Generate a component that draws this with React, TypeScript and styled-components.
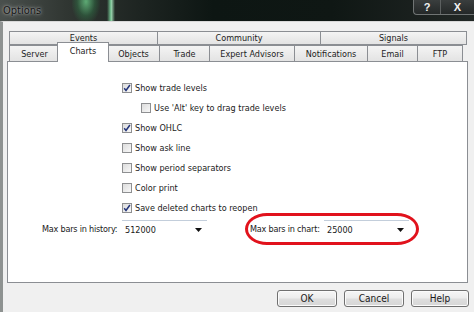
import styled, { createGlobalStyle } from "styled-components";

const GlobalStyle = createGlobalStyle`
  html, body {
    margin: 0;
    padding: 0;
    width: 474px;
    height: 312px;
    overflow: hidden;
    background: #1b211e;
  }
  * { box-sizing: border-box; }
  body {
    font-family: "DejaVu Sans Condensed", "Liberation Sans", Arial, sans-serif;
    font-size: 9px;
    color: #1a1a1a;
  }
`;

const topTabs = [
  { label: "Events", width: 148 },
  { label: "Community", width: 163 },
  { label: "Signals", width: 147 },
];

const bottomTabs = [
  { label: "Server", width: 50 },
  { label: "Charts", width: 52, active: true },
  { label: "Objects", width: 52 },
  { label: "Trade", width: 50 },
  { label: "Expert Advisors", width: 85 },
  { label: "Notifications", width: 73 },
  { label: "Email", width: 50 },
  { label: "FTP", width: 46 },
];

const options = [
  { label: "Show trade levels", checked: true },
  { label: "Use 'Alt' key to drag trade levels", checked: false, indent: true },
  { label: "Show OHLC", checked: true },
  { label: "Show ask line", checked: false },
  { label: "Show period separators", checked: false },
  { label: "Color print", checked: false },
  { label: "Save deleted charts to reopen", checked: true },
];

function CheckBox({ checked }: { checked: boolean }) {
  return (
    <Box>
      {checked && (
        <svg width="8" height="8" viewBox="0 0 8 8">
          <path d="M1.2 4.2 L3 6.4 L6.9 1" fill="none" stroke="#22337a" strokeWidth="1.5" />
        </svg>
      )}
    </Box>
  );
}

function Combo({ value, width }: { value: string; width: number }) {
  return (
    <ComboBox $width={width}>
      <span>{value}</span>
      <svg width="7" height="4" viewBox="0 0 7 4">
        <path d="M0 0 H7 L3.5 4 Z" fill="#111" />
      </svg>
    </ComboBox>
  );
}

export default function App() {
  return (
    <Window>
      <GlobalStyle />
      <TitleBar>
        <Glow />
        <Streak />
        <Title>Options</Title>
        <Controls>
          <CtrlButton $w={26}>?</CtrlButton>
          <CtrlButton $w={34}>X</CtrlButton>
        </Controls>
      </TitleBar>

      <Body>
        <TabRow>
          {topTabs.map((t) => (
            <Tab key={t.label} $width={t.width} $height={14}>{t.label}</Tab>
          ))}
        </TabRow>
        <TabRow>
          {bottomTabs.map((t) => (
            <Tab key={t.label} $width={t.width} $height={17} $active={t.active}>{t.label}</Tab>
          ))}
        </TabRow>

        <Panel>
          <OptionList>
            {options.map((o) => (
              <OptionRow key={o.label} $indent={o.indent}>
                <CheckBox checked={o.checked} />
                <span>{o.label}</span>
              </OptionRow>
            ))}
          </OptionList>

          <FieldRow>
            <Field>
              <Label $width={75}>Max bars in history:</Label>
              <Combo value="512000" width={85} />
            </Field>
            <Field>
              <Label $width={69}>Max bars in chart:</Label>
              <Combo value="25000" width={85} />
              <Highlight />
            </Field>
          </FieldRow>
        </Panel>

        <ButtonBar>
          <Button $w={60}>OK</Button>
          <Button $w={60}>Cancel</Button>
          <Button $w={58}>Help</Button>
        </ButtonBar>
      </Body>
    </Window>
  );
}

const Window = styled.div`
  width: 474px;
  height: 312px;
  display: flex;
  flex-direction: column;
  background: #1b211e;
`;

const TitleBar = styled.div`
  position: relative;
  height: 21px;
  flex-shrink: 0;
  display: flex;
  align-items: flex-start;
  background: linear-gradient(90deg, #4a504d 0%, #303632 14%, #1d2421 30%, #0d1613 45%, #0f1714 70%, #1a201e 88%, #222826 100%);
  overflow: hidden;
`;

const Glow = styled.div`
  position: absolute;
  left: 72px;
  top: -4px;
  width: 28px;
  height: 28px;
  background: radial-gradient(ellipse at 50% 20%, rgba(110, 210, 140, 0.75) 0%, rgba(50, 140, 80, 0.35) 45%, rgba(20, 60, 35, 0) 75%);
`;

const Streak = styled.div`
  position: absolute;
  left: 107px;
  top: 0;
  width: 8px;
  height: 21px;
  background: linear-gradient(90deg, rgba(60, 160, 100, 0) 0%, #7fd8a0 45%, #a8ecbf 55%, rgba(60, 160, 100, 0) 100%);
  opacity: 0.85;
`;

const Title = styled.div`
  position: relative;
  margin: 4px 0 0 3px;
  font-family: "DejaVu Sans Condensed", "Liberation Sans", Arial, sans-serif;
  font-size: 11px;
  color: #141414;
  text-shadow: 0 0 4px rgba(220, 220, 220, 0.7), 0 0 2px rgba(230, 230, 230, 0.6);
`;

const Controls = styled.div`
  position: relative;
  margin-left: auto;
  display: flex;
  height: 15px;
  border: 1px solid #707474;
  border-top: none;
  border-right: none;
  border-bottom-left-radius: 4px;
  background: linear-gradient(#3a3e3e, #242828);
  overflow: hidden;
`;

const CtrlButton = styled.div<{ $w: number }>`
  width: ${(p) => p.$w}px;
  display: flex;
  align-items: center;
  justify-content: center;
  color: #f2f2f2;
  font-family: "Liberation Sans", Arial, sans-serif;
  font-weight: bold;
  font-size: 11px;
  & + & {
    border-left: 1px solid #5c6060;
  }
`;

const Body = styled.div`
  flex: 1;
  display: flex;
  flex-direction: column;
  background: #f0f0f0;
  border-top: 1px solid #d8d8d8;
  border-left: 3px solid #8e9291;
  padding: 9px 6px 0 5px;
`;

const TabRow = styled.div`
  display: flex;
  padding-left: 1px;
`;

const Tab = styled.div<{ $width: number; $height: number; $active?: boolean }>`
  width: ${(p) => p.$width}px;
  height: ${(p) => p.$height + (p.$active ? 3 : 0)}px;
  margin: ${(p) => (p.$active ? "-3px -2px -1px -2px" : "0")};
  position: relative;
  z-index: ${(p) => (p.$active ? 2 : 1)};
  display: flex;
  align-items: center;
  justify-content: center;
  padding-bottom: ${(p) => (p.$active ? 4 : 0)}px;
  border: 1px solid #8b8e93;
  border-bottom: ${(p) => (p.$active ? "none" : "1px solid #8b8e93")};
  border-right-width: 0;
  &:last-child { border-right-width: 1px; }
  ${(p) => p.$active && "border-right-width: 1px;"}
  background: ${(p) => (p.$active ? "#ffffff" : "linear-gradient(#f4f4f4, #e3e3e3)")};
  color: #1c1c1c;
  white-space: nowrap;
`;

const Panel = styled.div`
  position: relative;
  z-index: 1;
  margin-top: -1px;
  margin-left: -1px;
  height: 222px;
  background: #ffffff;
  border: 1px solid #8b8e93;
  display: flex;
  flex-direction: column;
  padding: 20px 0 0 114px;
`;

const OptionList = styled.div`
  display: flex;
  flex-direction: column;
  gap: 8px;
`;

const OptionRow = styled.div<{ $indent?: boolean }>`
  display: flex;
  align-items: center;
  gap: 3px;
  height: 12px;
  margin-left: ${(p) => (p.$indent ? 19 : 0)}px;
  color: #1a1a1a;
`;

const Box = styled.span`
  width: 10px;
  height: 10px;
  flex-shrink: 0;
  border: 1px solid #8e8f91;
  background: linear-gradient(135deg, #dcdcdc, #f8f8f8);
  display: flex;
  align-items: center;
  justify-content: center;
`;

const FieldRow = styled.div`
  display: flex;
  align-items: center;
  margin: 6px 0 0 -80px;
  gap: 43px;
`;

const Field = styled.div`
  position: relative;
  display: flex;
  align-items: center;
  gap: 5px;
`;

const Label = styled.span<{ $width: number }>`
  width: ${(p) => p.$width}px;
  color: #1a1a1a;
  white-space: nowrap;
  letter-spacing: -0.2px;
`;

const ComboBox = styled.div<{ $width: number }>`
  width: ${(p) => p.$width}px;
  height: 17px;
  display: flex;
  align-items: center;
  justify-content: space-between;
  padding: 1px 5px 0 3px;
  border-top: 1px solid #c3cedb;
  color: #1a1a1a;
`;

const Highlight = styled.div`
  position: absolute;
  left: -5px;
  right: -10px;
  top: -7px;
  bottom: -8px;
  border: 3px solid #e1121c;
  border-radius: 22px / 16px;
  pointer-events: none;
`;

const ButtonBar = styled.div`
  display: flex;
  justify-content: flex-end;
  gap: 7px;
  padding: 7px 0 0;
  margin-right: -1px;
`;

const Button = styled.div<{ $w: number }>`
  width: ${(p) => p.$w}px;
  height: 17px;
  display: flex;
  align-items: center;
  justify-content: center;
  border: 1px solid #707070;
  border-radius: 3px;
  background: linear-gradient(#f6f6f6 0%, #ececec 48%, #dedede 52%, #d6d6d6 100%);
  box-shadow: inset 0 0 0 1px #fbfbfb;
  color: #1a1a1a;
  font-size: 10px;
`;
